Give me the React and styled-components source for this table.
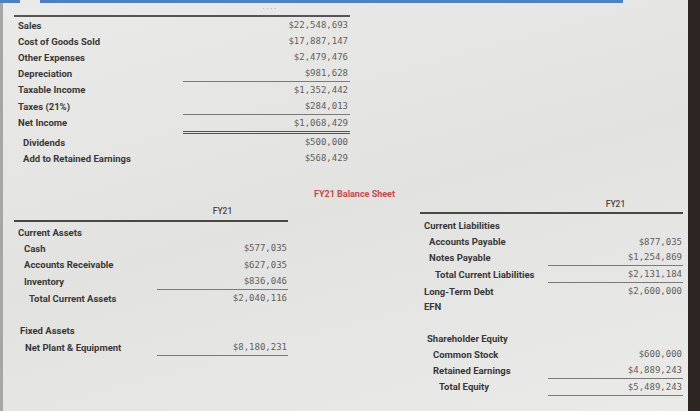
import React from "react";
import styled, { createGlobalStyle } from "styled-components";

const GlobalStyle = createGlobalStyle`
  html, body { margin: 0; padding: 0; }
  body {
    background: #e5e5e3;
    font-family: Roboto, "Liberation Sans", sans-serif;
  }
`;

const Screen = styled.div`
  width: 700px;
  height: 411px;
  box-sizing: border-box;
  border-right: 12px solid #2c2522;
  background: linear-gradient(165deg, #eaeae8 0%, #e2e2e0 50%, #eaeae8 100%);
  display: flex;
  flex-direction: column;
  overflow: hidden;
`;

const TopBar = styled.div`
  display: flex;
  gap: 20px;
  height: 3px;
  flex: none;
`;

const BarPiece = styled.div`
  width: ${(p) => p.$w}px;
  background: #4f80c2;
`;

const Sheet = styled.div`
  flex: 1;
  border-left: 3px solid #a6a6a4;
  padding-left: 11px;
  display: flex;
  flex-direction: column;
`;

const IncomeBlock = styled.div`
  width: 336px;
`;

const Dots = styled.div`
  height: 12px;
  display: flex;
  justify-content: flex-end;
  align-items: center;
  padding-right: 72px;
  font-size: 7px;
  letter-spacing: 2px;
  color: #8a8a8a;
`;

const Table = styled.div`
  border-top: 2px solid #555;
`;

const Row = styled.div`
  display: grid;
  grid-template-columns: ${(p) => p.$cols};
`;

const Label = styled.div`
  height: ${(p) => p.$h}px;
  display: flex;
  align-items: center;
  padding-left: ${(p) => p.$indent}px;
  font-size: 9.5px;
  font-weight: 700;
  color: #383838;
  white-space: nowrap;
`;

const Value = styled.div`
  height: ${(p) => p.$h}px;
  display: flex;
  align-items: center;
  justify-content: flex-end;
  padding-right: ${(p) => p.$pr}px;
  font-family: "DejaVu Sans Mono", "Liberation Mono", monospace;
  font-size: 9px;
  color: #5f5f5f;
  border-top: ${(p) => (p.$top ? "1px solid #7a7a7a" : "none")};
  border-bottom: ${(p) =>
    p.$double ? "3px double #555" : p.$bottom ? "1px solid #7a7a7a" : "none"};
`;

const BalanceSection = styled.div`
  margin-top: 23px;
  display: flex;
  flex-direction: column;
`;

const Title = styled.div`
  height: 10px;
  line-height: 10px;
  padding-left: 300px;
  font-size: 9px;
  font-weight: 700;
  color: #c84848;
`;

const Tables = styled.div`
  display: grid;
  grid-template-columns: 274px 132px 263px;
  align-items: start;
`;

const BalanceTable = styled.div`
  margin-top: ${(p) => p.$offset}px;
  grid-column: ${(p) => p.$col};
`;

const Header = styled.div`
  display: grid;
  grid-template-columns: ${(p) => p.$cols};
  height: 10px;
  padding-bottom: ${(p) => p.$pb}px;
  border-bottom: 2px solid #474747;
`;

const HeaderCell = styled.div`
  grid-column: 2;
  text-align: center;
  font-size: 8.5px;
  font-weight: 500;
  line-height: 10px;
  color: #484848;
`;

const Body = styled.div`
  padding-top: ${(p) => p.$pt}px;
`;

const income = [
  { label: "Sales", value: "$22,548,693" },
  { label: "Cost of Goods Sold", value: "$17,887,147" },
  { label: "Other Expenses", value: "$2,479,476" },
  { label: "Depreciation", value: "$981,628" },
  { label: "Taxable Income", value: "$1,352,442", top: true },
  { label: "Taxes (21%)", value: "$284,013" },
  { label: "Net Income", value: "$1,068,429", top: true, double: true },
  { label: "Dividends", value: "$500,000", indent: 9 },
  { label: "Add to Retained Earnings", value: "$568,429", indent: 9 },
];

const assets = [
  { label: "Current Assets", indent: 4 },
  { label: "Cash", value: "$577,035", indent: 10 },
  { label: "Accounts Receivable", value: "$627,035", indent: 10 },
  { label: "Inventory", value: "$836,046", indent: 10, bottom: true },
  { label: "Total Current Assets", value: "$2,040,116", indent: 15 },
  { label: "" },
  { label: "Fixed Assets", indent: 6 },
  { label: "Net Plant & Equipment", value: "$8,180,231", indent: 11, bottom: true },
];

const liabilities = [
  { label: "Current Liabilities", indent: 4 },
  { label: "Accounts Payable", value: "$877,035", indent: 9 },
  { label: "Notes Payable", value: "$1,254,869", indent: 9, bottom: true },
  { label: "Total Current Liabilities", value: "$2,131,184", indent: 15, bottom: true },
  { label: "Long-Term Debt", value: "$2,600,000", indent: 4 },
  { label: "EFN", indent: 4 },
  { label: "" },
  { label: "Shareholder Equity", indent: 7 },
  { label: "Common Stock", value: "$600,000", indent: 13 },
  { label: "Retained Earnings", value: "$4,889,243", indent: 13, bottom: true },
  { label: "Total Equity", value: "$5,489,243", indent: 19, bottom: true },
];

const Lines = ({ rows, cols, h, pr }) =>
  rows.map((r, i) => (
    <Row key={i} $cols={cols}>
      <Label $h={h} $indent={r.indent ?? 4}>
        {r.label}
      </Label>
      <Value $h={h} $pr={pr} $top={r.top} $bottom={r.bottom} $double={r.double}>
        {r.value}
      </Value>
    </Row>
  ));

export default function App() {
  return (
    <>
      <GlobalStyle />
      <Screen>
        <TopBar>
          <BarPiece $w={20} />
          <BarPiece $w={583} />
        </TopBar>
        <Sheet>
          <IncomeBlock>
            <Dots>····</Dots>
            <Table>
              <Lines rows={income} cols="169px 167px" h={16} pr={2} />
            </Table>
          </IncomeBlock>

          <BalanceSection>
            <Title>FY21 Balance Sheet</Title>
            <Tables>
              <BalanceTable $col={1} $offset={7}>
                <Header $cols="143px 131px" $pb={4}>
                  <HeaderCell>FY21</HeaderCell>
                </Header>
                <Body $pt={2}>
                  <Lines rows={assets} cols="143px 131px" h={16.3} pr={1} />
                </Body>
              </BalanceTable>
              <BalanceTable $col={3} $offset={0}>
                <Header $cols="128px 135px" $pb={3}>
                  <HeaderCell>FY21</HeaderCell>
                </Header>
                <Body $pt={4}>
                  <Lines rows={liabilities} cols="128px 135px" h={15.8} pr={1} />
                </Body>
              </BalanceTable>
            </Tables>
          </BalanceSection>
        </Sheet>
      </Screen>
    </>
  );
}
